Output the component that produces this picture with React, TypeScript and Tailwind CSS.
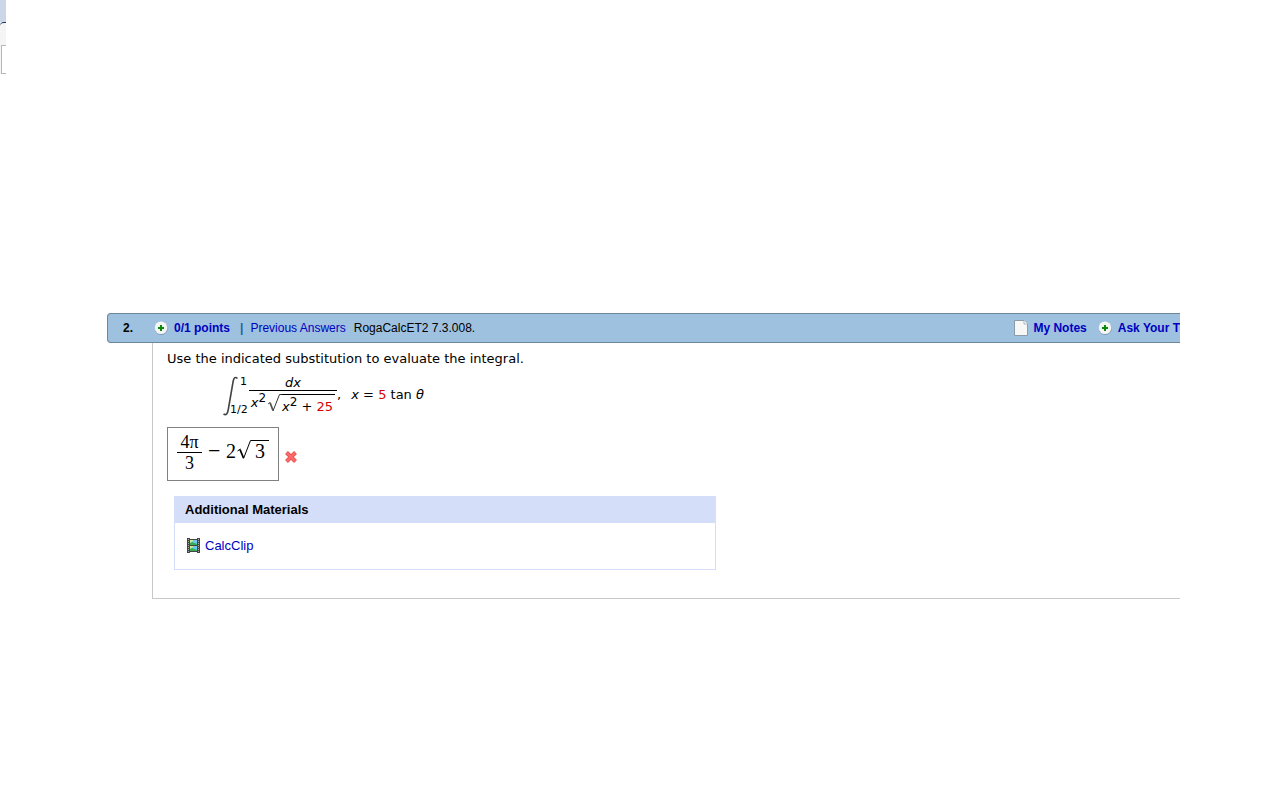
import React from "react";

const LINKS = {
  points: "#points",
  answers: "#previous-answers",
  notes: "#my-notes",
  ask: "#ask",
  clip: "#calcclip",
};

function PlusIcon() {
  return (
    <svg className="w-[14px] h-[14px] shrink-0" viewBox="0 0 14 14" aria-hidden="true">
      <circle cx="7.2" cy="7.5" r="6.4" fill="#7f9bb0" />
      <circle cx="7" cy="6.8" r="6.3" fill="#f5f5f5" />
      <path d="M6 4h2v2h2v2H8v2H6V8H4V6h2z" fill="#0a8a0a" />
    </svg>
  );
}

function NoteIcon() {
  return (
    <svg className="w-[14px] h-4 shrink-0" viewBox="0 0 14 16" aria-hidden="true">
      <path d="M.5 .5h9.5l3.5 3.5v11.500H.5z" fill="#f7f7f7" stroke="#8b9ba7" />
      <path d="M10 .5v3.500h3.500" fill="#fff" stroke="#a9b4bc" />
    </svg>
  );
}

function WrongIcon() {
  return (
    <svg className="w-[14px] h-[14px] shrink-0" viewBox="0 0 14 14" role="img" aria-label="Incorrect">
      <path d="M2.500 2.500l9 9M11.500 2.500l-9 9" stroke="#e65050" strokeWidth="4" />
      <path d="M3 3l8 8M11 3l-8 8" stroke="#ff6a6a" strokeWidth="2.400" />
    </svg>
  );
}

function FilmIcon() {
  return (
    <svg className="w-[13px] h-4 shrink-0" viewBox="0 0 13 16" aria-hidden="true">
      <path d="M0 0h3v15H0zM10 0h3v15h-3zM3 1h7v1H3zM3 7h7v1H3zM3 13h7v1H3z" fill="#454545" />
      <path d="M3 2h7v5H3zM3 8h7v5H3z" fill="#6cc6f2" />
      <path d="M3 5l2-1 5 2v1H3zM3 11l2-1 5 2v1H3z" fill="#35ad55" />
      <path d="M3 2h3v1L3 5zM3 8h3v1l-3 2z" fill="#cdee85" />
      <path d="M1 1h1v1H1zM1 3h1v1H1zM1 5h1v1H1zM1 7h1v1H1zM1 9h1v1H1zM1 11h1v1H1zM1 13h1v1H1zM11 1h1v1h-1zM11 3h1v1h-1zM11 5h1v1h-1zM11 7h1v1h-1zM11 9h1v1h-1zM11 11h1v1h-1zM11 13h1v1h-1z" fill="#a8a8a8" />
    </svg>
  );
}

function IntegralSign() {
  return (
    <svg className="w-[18px] h-10 shrink-0" viewBox="0 0 18 40" fill="none" aria-hidden="true">
      <path d="M15.500 2.500C13.500 .5 12 1.500 11.200 5L6.200 34C5.500 38 4 39.500 1.500 38" stroke="#444" strokeWidth="1.600" />
    </svg>
  );
}

function Denominator() {
  return (
    <div className="flex items-start pl-0.5 pr-0.5 h-6">
      <span className="italic leading-6">
        x<sup className="not-italic text-[12px] leading-none top-[-5px]">2</sup>
      </span>
      <svg className="w-[15px] h-[18px] mt-[3px] ml-px shrink-0" viewBox="0 0 15 18" fill="none" aria-hidden="true">
        <path d="M1 10l2-1.500" stroke="#555" />
        <path d="M3 8.500L6 16.500" stroke="#555" strokeWidth="1.800" />
        <path d="M6 17L12.500.5H15" stroke="#333" />
      </svg>
      <span className="border-t border-black mt-[3px] pr-0.5 leading-6 whitespace-nowrap">
        <i>x</i>
        <sup className="text-[12px] leading-none top-[-5px]">2</sup> + <span className="text-[#d60000]">25</span>
      </span>
    </div>
  );
}

function Integral() {
  return (
    <div className="flex items-start ml-[55px] mt-2 h-[43px] whitespace-nowrap">
      <IntegralSign />
      <div className="flex flex-col justify-between h-10 -ml-2.5 mr-px text-[11px] leading-3">
        <span className="pl-2.5">1</span>
        <span>1/2</span>
      </div>
      <div>
        <div className="text-center italic leading-[14px] border-b border-black">dx</div>
        <Denominator />
      </div>
      <span className="leading-[38px]">,</span>
      <span className="ml-2.5 leading-[38px]">
        <i>x</i> = <span className="text-[#d60000]">5</span> tan <i>θ</i>
      </span>
    </div>
  );
}

function AnswerBox() {
  return (
    <div className="flex items-center mt-2">
      <div className="flex w-[112px] h-[54px] border border-[#808080] pl-[9px] pt-1 font-['Liberation_Serif',serif] text-[20px] leading-[38px]">
        <span className="w-[25px] text-center text-[18px] leading-5">
          <span className="block border-b border-black">4π</span>
          <span className="block">3</span>
        </span>
        <span className="ml-1.5 w-[18px] text-[22px]">−</span>
        <span>2</span>
        <svg className="w-4 h-5 mt-2 shrink-0" viewBox="0 0 16 20" fill="none" aria-hidden="true">
          <path d="M1.500 11l3-2" stroke="#000" />
          <path d="M4 9.500L7.500 18" stroke="#000" strokeWidth="1.800" />
          <path d="M7.500 18.500L14.500 .5H16" stroke="#000" />
        </svg>
        <span className="self-start border-t border-black mt-2 pl-[3px] pr-1 leading-5">3</span>
      </div>
      <span className="ml-[5px] mt-1.5">
        <WrongIcon />
      </span>
    </div>
  );
}

export default function App() {
  return (
    <div className="bg-white text-black font-['Liberation_Sans',sans-serif]">
      {/* Edge of the window sitting behind the page */}
      <div className="w-1.5 overflow-hidden bg-[#f5f5f5]">
        <div className="h-[22px] bg-[#cbd7e9]" />
        <div className="h-[23px] border-t border-[#17355f] rounded-tl" />
        <div className="h-[29px] ml-px w-2 border border-r-0 border-[#b4b8bc] bg-white" />
      </div>

      <section className="mt-[239px] ml-[107px] mr-[100px]">
        <header className="flex items-center h-[30px] bg-[#9dc1df] border border-r-0 border-[#6b8799] rounded-l-[4px] text-[12px] whitespace-nowrap overflow-hidden">
          <h2 className="w-[46px] pl-[15px] font-bold">2.</h2>
          <PlusIcon />
          <a href={LINKS.points} className="ml-1.5 font-bold text-[#0000bf]">0/1 points</a>
          <span className="ml-2.5 text-[#285f8f] font-bold">|</span>
          <a href={LINKS.answers} className="ml-[7px] text-[#0000bf]">Previous Answers</a>
          <span className="ml-2">RogaCalcET2 7.3.008.</span>
          <div className="flex items-center ml-auto font-bold text-[#0000bf]">
            <NoteIcon />
            <a href={LINKS.notes} className="ml-[5px] mr-[11px]">My Notes</a>
            <PlusIcon />
            <a href={LINKS.ask} className="ml-1.5">Ask Your T</a>
          </div>
        </header>

        <div className="ml-[45px] border-l border-b border-[#c8c8c8] pl-3.5 pt-[7px] pb-7">
          <div className="font-['DejaVu_Sans',sans-serif] text-[13px]">
            <p className="leading-[18px]">Use the indicated substitution to evaluate the integral.</p>
            <Integral />
          </div>
          <AnswerBox />

          <div className="ml-[7px] mt-[15px] max-w-[542px] border border-[#d5def8] text-[13px]">
            <h3 className="h-[26px] leading-[26px] pl-2.5 bg-[#d5def8] font-bold">Additional Materials</h3>
            <div className="flex items-center h-[46px] pl-3">
              <FilmIcon />
              <a href={LINKS.clip} className="ml-[5px] text-[#0000bf]">CalcClip</a>
            </div>
          </div>
        </div>
      </section>
    </div>
  );
}
